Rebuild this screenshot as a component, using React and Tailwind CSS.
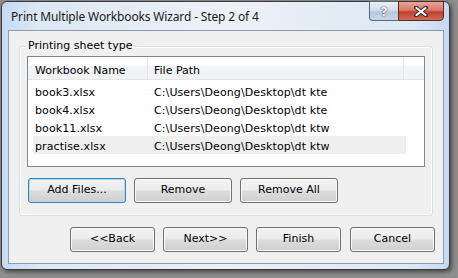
import React from 'react';

const files = [
  { name: 'book3.xlsx', path: 'C:\\Users\\Deong\\Desktop\\dt kte' },
  { name: 'book4.xlsx', path: 'C:\\Users\\Deong\\Desktop\\dt kte' },
  { name: 'book11.xlsx', path: 'C:\\Users\\Deong\\Desktop\\dt ktw' },
  { name: 'practise.xlsx', path: 'C:\\Users\\Deong\\Desktop\\dt ktw', selected: true },
];

const btnBase =
  'h-[25px] rounded-[3px] border text-[11px] text-black flex items-center justify-center bg-[linear-gradient(#f3f3f3_0%,#ebebeb_48%,#dddddd_52%,#cfcfcf_100%)]';

const Button = ({ label, focused, className = '' }) => (
  <button
    className={`${btnBase} ${
      focused
        ? 'border-[#3c7fb1] shadow-[inset_0_0_0_1px_#a6e0f5]'
        : 'border-[#707070] shadow-[inset_0_0_0_1px_#fcfcfc]'
    } ${className}`}
  >
    {label}
  </button>
);

export default function App() {
  return (
    <div className="w-[458px] h-[278px] bg-[#8e8e8e] overflow-hidden font-['DejaVu_Sans',sans-serif]">
      {/* Window frame */}
      <div className="relative ml-[1px] mt-[1px] w-[449px] h-[269px] rounded-[6px] border border-[#3a3a3a] bg-[linear-gradient(90deg,#c4daf2_0%,#dce8f5_8%,#edf1f6_50%,#dce8f5_92%,#c4daf2_100%)] flex flex-col shadow-[2px_2px_4px_rgba(0,0,0,0.5)]">
        {/* Title bar */}
        <div className="h-[28px] flex items-center pl-[9px] pt-[1px]">
          <span className="font-['Noto_Sans',sans-serif] text-[12px] text-[#1a1a1a] tracking-[-0.15px]">
            Print Multiple Workbooks Wizard - Step 2 of 4
          </span>
        </div>

        {/* Caption buttons */}
        <div className="absolute top-[-1px] right-[5px] flex h-[20px]">
          <div className="w-[29px] h-full border border-[#5b6878] border-r-0 rounded-bl-[4px] bg-[linear-gradient(#e9eef5_0%,#d5dfeb_45%,#b7c8dc_55%,#c9d6e5_100%)] flex items-center justify-center">
            <span className="font-['DejaVu_Sans',sans-serif] font-bold text-[13px] text-white leading-none [text-shadow:0_0_1px_#2c3440,0_0_1px_#2c3440]">?</span>
          </div>
          <div className="w-[46px] h-full border border-[#5a2a22] rounded-br-[4px] bg-[linear-gradient(#e8a79c_0%,#d9786a_45%,#c2412f_55%,#d26a52_100%)] flex items-center justify-center">
            <svg width="14" height="11" viewBox="0 0 14 11">
              <path d="M2 1.5 L12 9.5 M12 1.5 L2 9.5" stroke="#3a2a28" strokeWidth="4" strokeLinecap="round" />
              <path d="M2.5 2 L11.5 9 M11.5 2 L2.5 9" stroke="#ffffff" strokeWidth="2.2" strokeLinecap="round" />
            </svg>
          </div>
        </div>

        {/* Client area */}
        <div className="ml-[6px] mr-[5px] mb-[5px] flex-1 border border-[#8d9bb0] bg-[#f0f0f0] flex flex-col">
          {/* Group box */}
          <div className="relative mt-[15px] mx-[10px] h-[170px] rounded-[3px] border border-[#d5dfe5] shadow-[inset_0_0_0_1px_#ffffff] px-[7px] pt-[9px]">
            <span className="absolute left-[6px] top-[-9px] px-[2px] bg-[#f0f0f0] text-[11px] text-black leading-[16px]">
              Printing sheet type
            </span>

            {/* List view */}
            <div className="h-[111px] border border-[#828790] bg-white">
              <div className="h-[23px] flex text-[11px] text-black bg-[linear-gradient(#ffffff_0%,#ffffff_40%,#f3f4f6_41%,#f1f2f4_100%)] border-b border-[#e5e5e5]">
                <div className="w-[120px] flex items-center pl-[7px] pt-[6px] border-r border-[#e3e5e8]">Workbook Name</div>
                <div className="w-[256px] flex items-center pl-[6px] pt-[6px] border-r border-[#e3e5e8]">File Path</div>
                <div className="flex-1" />
              </div>
              <div className="pt-[2px] pl-[5px] pr-[18px]">
                {files.map((f) => (
                  <div
                    key={f.name}
                    className={`h-[18px] flex items-center pt-[4px] text-[11px] text-black tracking-[0.1px] ${f.selected ? 'bg-[#efefef]' : ''}`}
                  >
                    <span className="w-[121px] pl-[2px]">{f.name}</span>
                    <span>{f.path}</span>
                  </div>
                ))}
              </div>
            </div>

            <div className="flex gap-[8px] mt-[11px] pl-[1px]">
              <Button label="Add Files..." focused className="w-[98px]" />
              <Button label="Remove" className="w-[98px]" />
              <Button label="Remove All" className="w-[98px]" />
            </div>
          </div>

          {/* Wizard navigation */}
          <div className="flex justify-end gap-[8px] mt-[11px] pr-[8px]">
            <Button label="<<Back" className="w-[85px]" />
            <Button label="Next>>" className="w-[85px]" />
            <Button label="Finish" className="w-[85px]" />
            <Button label="Cancel" className="w-[85px] ml-[1px]" />
          </div>
        </div>
      </div>
    </div>
  );
}
